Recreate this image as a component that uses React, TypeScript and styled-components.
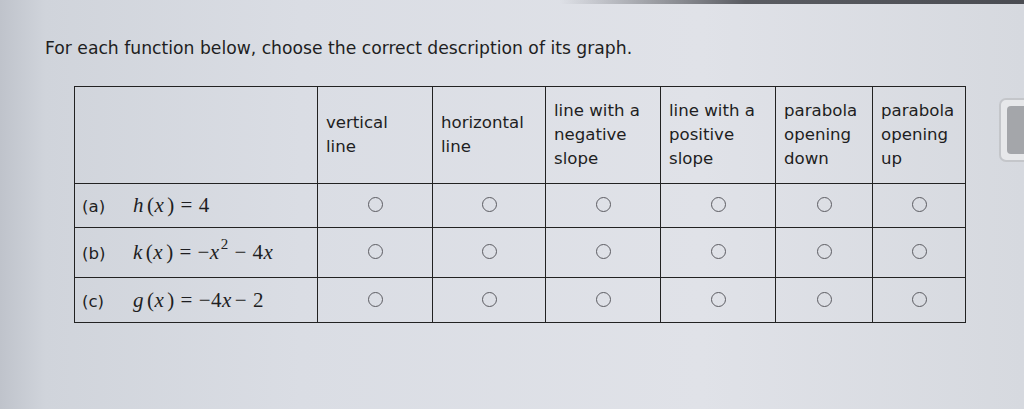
import React from 'react';
import styled, { createGlobalStyle } from 'styled-components';

const GlobalStyle = createGlobalStyle`
  html, body {
    margin: 0;
    padding: 0;
    width: 1024px;
    height: 409px;
    overflow: hidden;
  }
`;

const Page = styled.div`
  width: 1024px;
  height: 409px;
  box-sizing: border-box;
  padding: 37px 0 0 45px;
  background: linear-gradient(90deg, #bfc3cb 0px, #d0d4db 45px, #dadde4 300px, #e0e2e8 700px, #d6d9df 1024px);
  position: relative;
  font-family: 'DejaVu Sans', Verdana, sans-serif;
  color: #1e1e22;
`;

const TopBand = styled.div`
  position: absolute;
  top: 0;
  left: 560px;
  right: 0;
  height: 4px;
  background: linear-gradient(90deg, rgba(80, 82, 88, 0) 0%, #5a5c62 40%, #4a4c52 100%);
`;

const Prompt = styled.p`
  margin: 0;
  font-size: 17.2px;
  line-height: 22px;
`;

const Body = styled.div`
  display: flex;
  align-items: flex-start;
  margin: 27px 0 0 29px;
`;

const Table = styled.table`
  border-collapse: collapse;
  table-layout: fixed;
  width: 891px;
  border: 1.5px solid #222;
`;

const HeadCell = styled.th<{ $w: number }>`
  box-sizing: border-box;
  width: ${(p) => p.$w}px;
  height: 97px;
  padding: 0 0 0 8px;
  border: 1.5px solid #222;
  text-align: left;
  vertical-align: middle;
  font-weight: normal;
  font-size: 16.6px;
  line-height: 24px;
  white-space: nowrap;
  overflow: hidden;
`;

const Row = styled.tr<{ $h: number }>`
  height: ${(p) => p.$h}px;
`;

const LabelCell = styled.td`
  border: 1.5px solid #222;
  padding: 0 0 0 7px;
  vertical-align: middle;
  white-space: nowrap;
`;

const Tag = styled.span`
  display: inline-block;
  width: 51px;
  font-size: 16.6px;
`;

const Math = styled.span`
  font-family: 'Liberation Serif', 'Times New Roman', serif;
  font-size: 21px;
  letter-spacing: 0.5px;
`;

const Var = styled.i`
  font-style: italic;
  margin-right: 3px;
`;

const Sup = styled.sup`
  font-size: 15px;
  vertical-align: 10px;
  line-height: 0;
  margin-left: -2px;
`;

const ChoiceCell = styled.td`
  border: 1.5px solid #222;
  text-align: center;
  vertical-align: middle;
`;

const Radio = styled.span`
  display: inline-block;
  width: 13px;
  height: 13px;
  border: 1.5px solid #5c5c62;
  border-radius: 50%;
  margin-top: 2px;
`;

const SideButton = styled.div`
  margin: 12px 0 0 33px;
  width: 40px;
  height: 64px;
  box-sizing: border-box;
  border: 2px solid #c4c6ca;
  border-radius: 7px;
  background: #e7e8ea;
  padding: 6px 0 6px 6px;
  display: flex;
  flex-shrink: 0;
`;

const SideInner = styled.div`
  flex: 1;
  background: #a4a6aa;
  border-radius: 4px 0 0 4px;
`;

const columns: { w: number; lines: string[] }[] = [
  { w: 115, lines: ['vertical', 'line'] },
  { w: 113, lines: ['horizontal', 'line'] },
  { w: 115, lines: ['line with a', 'negative', 'slope'] },
  { w: 115, lines: ['line with a', 'positive', 'slope'] },
  { w: 97, lines: ['parabola', 'opening', 'down'] },
  { w: 93, lines: ['parabola', 'opening', 'up'] },
];

const rows = [
  {
    tag: '(a)',
    h: 44,
    expr: (
      <>
        <Var>h</Var>(<Var>x</Var>) = 4
      </>
    ),
  },
  {
    tag: '(b)',
    h: 50,
    expr: (
      <>
        <Var>k</Var>(<Var>x</Var>) = −<Var>x</Var>
        <Sup>2</Sup> − 4<Var>x</Var>
      </>
    ),
  },
  {
    tag: '(c)',
    h: 45,
    expr: (
      <>
        <Var>g</Var>(<Var>x</Var>) = −4<Var>x</Var>− 2
      </>
    ),
  },
];

const App = () => {
  return (
    <Page>
      <GlobalStyle />
      <TopBand />
      <Prompt>For each function below, choose the correct description of its graph.</Prompt>
      <Body>
        <Table>
          <thead>
            <tr>
              <HeadCell $w={243} />
              {columns.map((c, i) => (
                <HeadCell key={i} $w={c.w}>
                  {c.lines.map((l, j) => (
                    <div key={j}>{l}</div>
                  ))}
                </HeadCell>
              ))}
            </tr>
          </thead>
          <tbody>
            {rows.map((r) => (
              <Row key={r.tag} $h={r.h}>
                <LabelCell>
                  <Tag>{r.tag}</Tag>
                  <Math>{r.expr}</Math>
                </LabelCell>
                {columns.map((_, i) => (
                  <ChoiceCell key={i}>
                    <Radio />
                  </ChoiceCell>
                ))}
              </Row>
            ))}
          </tbody>
        </Table>
        <SideButton>
          <SideInner />
        </SideButton>
      </Body>
    </Page>
  );
};

export default App;
